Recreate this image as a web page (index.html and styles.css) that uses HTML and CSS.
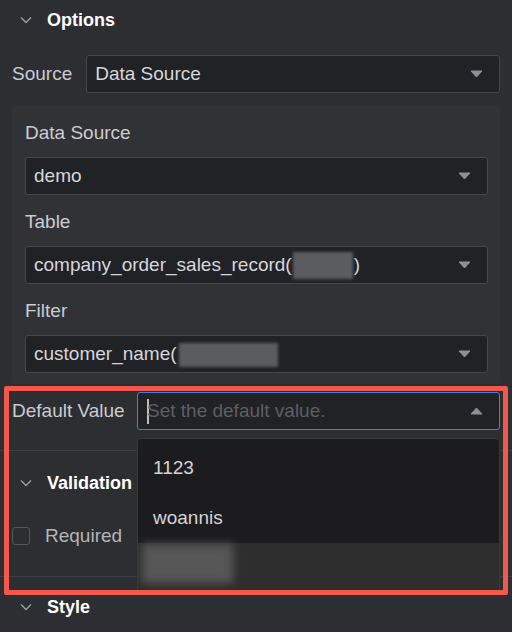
FILE: index.html
```html
<!DOCTYPE html>
<html lang="en">
<head>
<meta charset="utf-8">
<title>Options</title>
<link rel="stylesheet" href="styles.css">
</head>
<body>
<div class="page">
  <div class="section-head first">
    <svg class="chev" width="12" height="8" viewBox="0 0 12 8"><polyline points="1,1.5 6,6.5 11,1.5" fill="none" stroke="#9c9da3" stroke-width="1.4"/></svg>
    <span>Options</span>
  </div>

  <div class="row source-row">
    <span class="row-label">Source</span>
    <div class="select">
      <span class="val">Data Source</span>
      <svg class="tri" width="13" height="8" viewBox="0 0 13 8"><polygon points="1,1 12,1 6.5,7" fill="#8d8f99" stroke="#8d8f99" stroke-width="1" stroke-linejoin="round"/></svg>
    </div>
  </div>

  <div class="panel">
    <div class="field">
      <div class="field-label">Data Source</div>
      <div class="select">
        <span class="val">demo</span>
        <svg class="tri" width="13" height="8" viewBox="0 0 13 8"><polygon points="1,1 12,1 6.5,7" fill="#8d8f99" stroke="#8d8f99" stroke-width="1" stroke-linejoin="round"/></svg>
      </div>
    </div>
    <div class="field">
      <div class="field-label">Table</div>
      <div class="select">
        <span class="val">company_order_sales_record(<span class="redact r-table"></span>)</span>
        <svg class="tri" width="13" height="8" viewBox="0 0 13 8"><polygon points="1,1 12,1 6.5,7" fill="#8d8f99" stroke="#8d8f99" stroke-width="1" stroke-linejoin="round"/></svg>
      </div>
    </div>
    <div class="field">
      <div class="field-label">Filter</div>
      <div class="select">
        <span class="val">customer_name(<span class="redact r-filter"></span></span>
        <svg class="tri" width="13" height="8" viewBox="0 0 13 8"><polygon points="1,1 12,1 6.5,7" fill="#8d8f99" stroke="#8d8f99" stroke-width="1" stroke-linejoin="round"/></svg>
      </div>
    </div>
  </div>

  <div class="row default-row">
    <span class="row-label dv-label">Default Value</span>
    <div class="select-wrap">
      <div class="select focused">
        <span class="val placeholder"><span class="caret"></span>Set the default value.</span>
        <svg class="tri" width="13" height="8" viewBox="0 0 13 8"><polygon points="1,7 12,7 6.5,1" fill="#8d8f99" stroke="#8d8f99" stroke-width="1" stroke-linejoin="round"/></svg>
      </div>
      <div class="dropdown">
        <div class="opt">1123</div>
        <div class="opt">woannis</div>
        <div class="opt active"><span class="redact r-opt"></span></div>
      </div>
    </div>
  </div>

  <div class="section-head">
    <svg class="chev" width="12" height="8" viewBox="0 0 12 8"><polyline points="1,1.5 6,6.5 11,1.5" fill="none" stroke="#9c9da3" stroke-width="1.4"/></svg>
    <span>Validation</span>
  </div>
  <div class="check-row">
    <span class="checkbox"></span>
    <span class="check-label">Required</span>
  </div>

  <div class="section-head last">
    <svg class="chev" width="12" height="8" viewBox="0 0 12 8"><polyline points="1,1.5 6,6.5 11,1.5" fill="none" stroke="#9c9da3" stroke-width="1.4"/></svg>
    <span>Style</span>
  </div>

  <div class="highlight-box"></div>
</div>
</body>
</html>
```

FILE: styles.css
```css
* { box-sizing: border-box; }

html, body {
  margin: 0;
  padding: 0;
  background: #2d2e32;
  height: 100%;
  overflow: hidden;
}

body {
  font-family: "Liberation Sans", Arial, Helvetica, sans-serif;
  font-size: 19px;
  line-height: 22px;
  color: #c9cacd;
}

.page {
  position: relative;
  width: 512px;
  min-height: 632px;
}

.section-head {
  display: flex;
  align-items: center;
  height: 52px;
  padding: 12px 0 0 20px;
  font-size: 18px;
  font-weight: bold;
  color: #ffffff;
}

.section-head.first {
  height: 40px;
  padding-top: 0;
}

.section-head.last {
  height: 50px;
  padding-top: 10px;
}

.chev {
  display: block;
  margin-right: 15px;
  flex: none;
}

.row {
  display: flex;
  align-items: center;
  padding: 0 12px;
}

.source-row {
  margin-top: 15px;
}

.row-label {
  flex: none;
  margin-right: 14px;
  color: #cbccd0;
}

.dv-label {
  width: 125px;
  margin-right: 0;
}

.select {
  flex: 1;
  display: flex;
  align-items: center;
  justify-content: space-between;
  height: 38px;
  padding: 0 16px 0 8px;
  background: #212226;
  border: 1px solid #46474c;
  border-radius: 3px;
  color: #d6d7da;
}

.val {
  white-space: nowrap;
  display: flex;
  align-items: center;
}

.tri {
  display: block;
  flex: none;
}

.panel {
  margin: 13px 12px 0;
  padding: 16px 12px 11px 13px;
  background: #313236;
  border-radius: 4px;
}

.field + .field {
  margin-top: 16px;
}

.field-label {
  margin-bottom: 13px;
  color: #cbccd0;
}

.redact {
  display: inline-block;
  background: #5b5c60;
  filter: blur(1.5px);
}

.r-table {
  width: 60px;
  height: 27px;
  margin: 0 1px;
}

.r-filter {
  width: 99px;
  height: 24px;
  margin-left: 2px;
  position: relative;
  top: 1px;
}

.default-row {
  margin-top: 8px;
  padding-bottom: 20px;
  border-bottom: 1px solid #3d3e42;
}

.select-wrap {
  flex: 1;
  position: relative;
}

.select.focused {
  border-color: #3f80e0;
  padding-left: 9px;
}

.placeholder {
  color: #5d5f64;
}

.caret {
  display: inline-block;
  width: 2px;
  height: 25px;
  margin-right: -2px;
  background: #bdbdbf;
}

.dropdown {
  position: absolute;
  left: 0;
  right: 0;
  top: calc(100% + 8px);
  z-index: 5;
  padding-top: 4px;
  background: #1c1c1e;
  border: 1px solid #38393c;
  border-radius: 4px;
  overflow: hidden;
}

.opt {
  height: 50px;
  display: flex;
  align-items: center;
  padding-left: 15px;
  color: #d4d4d6;
}

.opt.active {
  background: #2e2e2f;
  padding-left: 4px;
  align-items: flex-start;
}

.r-opt {
  width: 91px;
  height: 39px;
  margin-top: 1px;
  background: #575757;
  filter: blur(4px);
}

.check-row {
  display: flex;
  align-items: center;
  margin-top: 22px;
  padding: 0 12px 29px;
  border-bottom: 1px solid #3d3e42;
}

.checkbox {
  display: block;
  width: 18px;
  height: 18px;
  border: 1px solid #55565b;
  border-radius: 3px;
  margin-right: 15px;
}

.check-label {
  color: #b4b5b9;
}

.highlight-box {
  position: absolute;
  left: 4px;
  top: 386px;
  width: 504px;
  height: 209px;
  border: 5px solid #f4574b;
  border-radius: 2px;
  z-index: 10;
  pointer-events: none;
}
```
